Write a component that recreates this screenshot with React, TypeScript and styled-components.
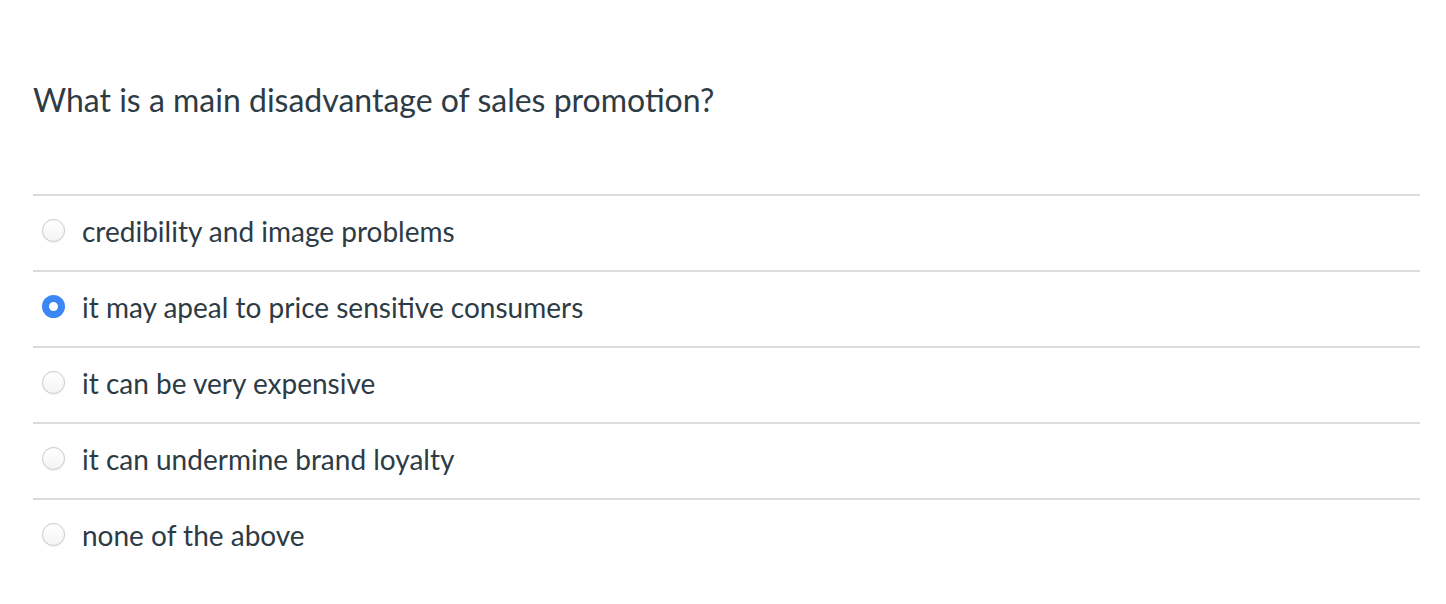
import styled, { createGlobalStyle } from "styled-components";

const GlobalStyle = createGlobalStyle`
  html, body {
    margin: 0;
    padding: 0;
    background: #ffffff;
  }
  body {
    font-family: Lato, "Noto Sans", sans-serif;
    color: #2d3b45;
  }
`

const Page = styled.div`
  padding: 0 26px 0 33px;
`

const Question = styled.div`
  font-size: 32px;
  line-height: 38px;
  padding-top: 81px;
  padding-bottom: 75px;
`

const AnswerList = styled.div`
  display: flex;
  flex-direction: column;
`

const Answer = styled.label`
  box-sizing: border-box;
  display: flex;
  align-items: center;
  gap: 17px;
  height: 76px;
  border-top: 2px solid #dcdcdc;
  padding: 0 0 5px 9px;
  font-size: 28px;
`

const Radio = styled.span<{ $checked?: boolean }>`
  box-sizing: border-box;
  width: 23px;
  height: 23px;
  border-radius: 50%;
  flex: none;
  ${({ $checked }) =>
    $checked
      ? `
    background: #fff;
    border: 7px solid #3c86f5;
  `
      : `
    background: linear-gradient(#ffffff, #f4f4f4);
    border: 1px solid #c8c8c8;
    box-shadow: 0 1px 1px rgba(0, 0, 0, 0.06);
  `}
`

const Label = styled.span`
  line-height: 32px;
`

const answers = [
  "credibility and image problems",
  "it may apeal to price sensitive consumers",
  "it can be very expensive",
  "it can undermine brand loyalty",
  "none of the above",
]

export default function App() {
  return (
    <>
      <GlobalStyle />
      <Page>
        <Question>What is a main disadvantage of sales promotion?</Question>
        <AnswerList>
          {answers.map((text, id) => (
            <Answer key={id}>
              <Radio $checked={id === 1} />
              <Label>{text}</Label>
            </Answer>
          ))}
        </AnswerList>
      </Page>
    </>
  )
}
